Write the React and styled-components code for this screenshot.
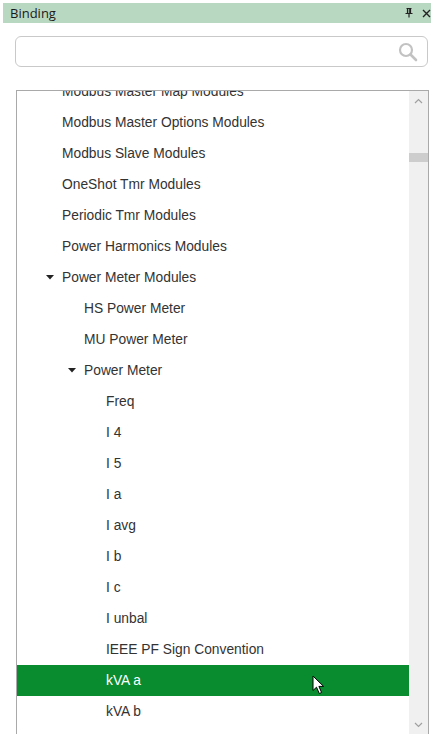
import React from "react";
import styled, { createGlobalStyle } from "styled-components";

const Global = createGlobalStyle`
  html, body { margin: 0; padding: 0; background: #ffffff; }
  body { width: 431px; height: 734px; overflow: hidden; }
`;

const Page = styled.div`
  width: 431px;
  height: 734px;
  overflow: hidden;
  background: #fff;
  padding: 3px 0 0 3px;
  box-sizing: border-box;
  display: flex;
  flex-direction: column;
`;

const TitleBar = styled.div`
  height: 20px;
  background: #b9d8c2;
  display: flex;
  align-items: center;
  padding-left: 7px;
  font-family: "Open Sans", "Noto Sans", sans-serif;
  font-size: 13px;
  color: #1a1a1a;
  flex-shrink: 0;
`;

const Title = styled.span`
  flex: 1;
  line-height: 20px;
`;

const TitleButtons = styled.div`
  display: flex;
  align-items: center;
  gap: 9px;
  margin-right: 0px;
`;

const Body = styled.div`
  display: flex;
  flex-direction: column;
  padding: 13px 0 0 12px;
  flex: 1;
  min-height: 0;
`;

const SearchBox = styled.div`
  width: 413px;
  height: 31px;
  box-sizing: border-box;
  border: 1px solid #c9c9c9;
  border-radius: 6px;
  display: flex;
  align-items: center;
  justify-content: flex-end;
  padding-right: 9px;
  flex-shrink: 0;
`;

const TreeBox = styled.div`
  margin-top: 23px;
  margin-left: 1px;
  width: 413px;
  height: 646px;
  box-sizing: border-box;
  border: 1px solid #a9a9a9;
  display: flex;
  flex-shrink: 0;
`;

const Viewport = styled.div`
  flex: 1;
  overflow: hidden;
  position: relative;
`;

const List = styled.div`
  margin-top: -15px;
  display: flex;
  flex-direction: column;
`;

const Row = styled.div`
  height: 31px;
  display: flex;
  align-items: center;
  padding-left: ${(p) => 7 + p.$level * 22}px;
  background: ${(p) => (p.$selected ? "#098b30" : "transparent")};
  color: ${(p) => (p.$selected ? "#ffffff" : "#333333")};
  font-family: "Liberation Sans", Arial, sans-serif;
  font-size: 13.8px;
  white-space: nowrap;
`;

const Toggle = styled.span`
  width: 16px;
  display: inline-flex;
  align-items: center;
  justify-content: flex-start;
  flex-shrink: 0;
`;

const Label = styled.span`
  line-height: 31px;
`;

const Scrollbar = styled.div`
  width: 19px;
  background: #f0f0f0;
  display: flex;
  flex-direction: column;
  align-items: center;
  flex-shrink: 0;
`;

const ArrowCell = styled.div`
  height: 20px;
  width: 100%;
  display: flex;
  align-items: center;
  justify-content: center;
  flex-shrink: 0;
`;

const Track = styled.div`
  flex: 1;
  width: 100%;
  display: flex;
  flex-direction: column;
`;

const Thumb = styled.div`
  margin-top: 42px;
  height: 9px;
  width: 100%;
  background: #cdcdcd;
`;

const Cursor = styled.svg`
  position: absolute;
  left: ${(p) => p.$x}px;
  top: ${(p) => p.$y}px;
`;

const rows = [
  { t: "Modbus Master Map Modules", l: 1 },
  { t: "Modbus Master Options Modules", l: 1 },
  { t: "Modbus Slave Modules", l: 1 },
  { t: "OneShot Tmr Modules", l: 1 },
  { t: "Periodic Tmr Modules", l: 1 },
  { t: "Power Harmonics Modules", l: 1 },
  { t: "Power Meter Modules", l: 1, open: true },
  { t: "HS Power Meter", l: 2 },
  { t: "MU Power Meter", l: 2 },
  { t: "Power Meter", l: 2, open: true },
  { t: "Freq", l: 3 },
  { t: "I 4", l: 3 },
  { t: "I 5", l: 3 },
  { t: "I a", l: 3 },
  { t: "I avg", l: 3 },
  { t: "I b", l: 3 },
  { t: "I c", l: 3 },
  { t: "I unbal", l: 3 },
  { t: "IEEE PF Sign Convention", l: 3 },
  { t: "kVA a", l: 3, sel: true },
  { t: "kVA b", l: 3 },
];

const Caret = () => (
  <svg width="8" height="5" viewBox="0 0 8 5">
    <path d="M0 0 L8 0 L4 4.5 Z" fill="#222" />
  </svg>
);

const Chevron = ({ down }) => (
  <svg width="9" height="6" viewBox="0 0 9 6">
    <path d={down ? "M1 1 L4.5 4.5 L8 1" : "M1 5 L4.5 1.5 L8 5"} stroke="#a0a0a0" strokeWidth="1.2" fill="none" />
  </svg>
);

export default function App() {
  return (
    <>
      <Global />
      <Page>
        <TitleBar>
          <Title>Binding</Title>
          <TitleButtons>
            <svg width="8" height="10" viewBox="0 0 8 10">
              <path d="M1.5 0.5 H6.5 M2.5 0.5 V5.5 M5.5 0.5 V5.5 M0.5 5.5 H7.5 M4 5.5 V9.5" stroke="#222" strokeWidth="1.2" fill="none" />
              <path d="M4.3 1 V5" stroke="#222" strokeWidth="1" />
            </svg>
            <svg width="9" height="9" viewBox="0 0 9 9">
              <path d="M1 1 L8 8 M8 1 L1 8" stroke="#222" strokeWidth="1.4" />
            </svg>
          </TitleButtons>
        </TitleBar>
        <Body>
          <SearchBox>
            <svg width="20" height="20" viewBox="0 0 20 20">
              <circle cx="8" cy="8" r="6" stroke="#c2c2c2" strokeWidth="2.2" fill="none" />
              <path d="M12.5 12.5 L18 18" stroke="#c2c2c2" strokeWidth="2.6" strokeLinecap="round" />
            </svg>
          </SearchBox>
          <TreeBox>
            <Viewport>
              <List>
                {rows.map((r, i) => (
                  <Row key={i} $level={r.l} $selected={r.sel}>
                    <Toggle>{r.open ? <Caret /> : null}</Toggle>
                    <Label>{r.t}</Label>
                  </Row>
                ))}
              </List>
              <Cursor $x={295} $y={584} width="14" height="20" viewBox="0 0 14 20">
                <path d="M1 1 L1 15.5 L4.5 12.2 L7.3 18.5 L9.6 17.5 L6.9 11.4 L11.6 11.4 Z" fill="#fff" stroke="#000" strokeWidth="1" strokeLinejoin="round" />
              </Cursor>
            </Viewport>
            <Scrollbar>
              <ArrowCell>
                <Chevron />
              </ArrowCell>
              <Track>
                <Thumb />
              </Track>
              <ArrowCell>
                <Chevron down />
              </ArrowCell>
            </Scrollbar>
          </TreeBox>
        </Body>
      </Page>
    </>
  );
}
